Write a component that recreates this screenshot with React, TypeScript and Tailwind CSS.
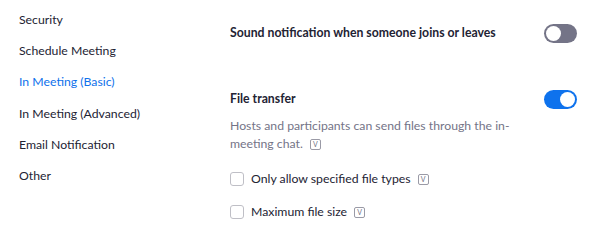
const navItems = [
  'Security',
  'Schedule Meeting',
  'In Meeting (Basic)',
  'In Meeting (Advanced)',
  'Email Notification',
  'Other',
]

function Toggle({ on }: { on: boolean }) {
  return (
    <div
      className={`flex h-[19px] w-[33px] items-center rounded-full p-[2px] ${
        on ? 'justify-end bg-[#0e72ed]' : 'justify-start bg-[#747487]'
      }`}
    >
      <div className="h-[15px] w-[15px] rounded-full bg-white" />
    </div>
  )
}

function VBadge() {
  return (
    <span className="ml-[7px] inline-flex h-[11px] w-[11px] items-center justify-center rounded-[2px] border border-[#9a9aa6] align-middle text-[7px] leading-none text-[#747487]">
      V
    </span>
  )
}

function Check({ label }: { label: string }) {
  return (
    <div className="flex items-center text-[12.25px] leading-[18px] text-[#232333]">
      <span className="mr-[7px] h-[14px] w-[14px] rounded-[3px] border border-[#bfbfc6] bg-white" />
      <span>{label}</span>
      <VBadge />
    </div>
  )
}

export default function App() {
  return (
    <div
      className="flex h-[230px] w-[600px] bg-white"
      style={{ fontFamily: 'Lato, "Open Sans", sans-serif' }}
    >
      <nav className="w-[230px] pl-[19px] pt-[4px]">
        {navItems.map((item) => (
          <div
            key={item}
            className={`text-[12.25px] leading-[31.2px] ${
              item === 'In Meeting (Basic)' ? 'text-[#0e71eb]' : 'text-[#232333]'
            }`}
          >
            {item}
          </div>
        ))}
      </nav>
      <main className="flex-1 pr-[23px] pt-[24px]">
        <div className="flex h-[19px] items-center justify-between">
          <span className="text-[12.25px] font-bold text-[#232333]">
            Sound notification when someone joins or leaves
          </span>
          <Toggle on={false} />
        </div>
        <div className="mt-[47px] flex h-[19px] items-center justify-between">
          <span className="text-[12.25px] font-bold text-[#232333]">File transfer</span>
          <Toggle on />
        </div>
        <p className="mt-[8px] w-[290px] text-[12.25px] leading-[18px] text-[#747487]">
          Hosts and participants can send files through the in-meeting chat.
          <VBadge />
        </p>
        <div className="mt-[17px] flex flex-col gap-[15px]">
          <Check label="Only allow specified file types" />
          <Check label="Maximum file size" />
        </div>
      </main>
    </div>
  )
}
